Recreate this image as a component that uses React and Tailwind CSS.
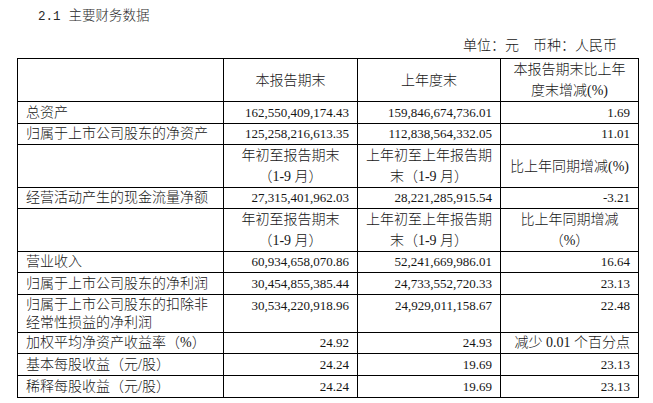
const rows1 = [
  { label: "总资产", a: "162,550,409,174.43", b: "159,846,674,736.01", c: "1.69", h: "h-[22px]" },
  { label: "归属于上市公司股东的净资产", a: "125,258,216,613.35", b: "112,838,564,332.05", c: "11.01", h: "h-[21px]" },
]

const rows3 = [
  { label: "营业收入", a: "60,934,658,070.86", b: "52,241,669,986.01", c: "16.64", h: "h-[21px]" },
  { label: "归属于上市公司股东的净利润", a: "30,454,855,385.44", b: "24,733,552,720.33", c: "23.13", h: "h-[22px]" },
]

const rows4 = [
  { label: "加权平均净资产收益率（%）", a: "24.92", b: "24.93", c: "减少 0.01 个百分点", h: "h-[20px]" },
  { label: "基本每股收益（元/股）", a: "24.24", b: "19.69", c: "23.13", h: "h-[22px]" },
  { label: "稀释每股收益（元/股）", a: "24.24", b: "19.69", c: "23.13", h: "h-[22px]" },
]

const cell = "border border-black p-0 align-middle"
const num = "text-right pr-[8px] text-[13px] leading-[20px]"

function DataRow({ r }) {
  return (
    <tr className={r.h}>
      <td className={`${cell} pl-[8px] text-[14px] leading-[20px]`}>{r.label}</td>
      <td className={`${cell} ${num}`}>{r.a}</td>
      <td className={`${cell} ${num}`}>{r.b}</td>
      <td className={`${cell} ${num} ${r.c.length > 6 ? "text-[14px]" : ""}`}>{r.c}</td>
    </tr>
  )
}

function SubHead({ last, h }) {
  return (
    <tr className={h}>
      <td className={cell}></td>
      <td className={`${cell} text-center text-[14px] leading-[21px]`}>
        年初至报告期末
        <br />
        （1-9 月）
      </td>
      <td className={`${cell} text-center text-[14px] leading-[21px]`}>
        上年初至上年报告期
        <br />
        末（1-9 月）
      </td>
      {last}
    </tr>
  )
}

export default function App() {
  return (
    <div
      className="w-[653px] h-[403px] bg-white text-[#151515] font-light overflow-hidden"
      style={{ fontFamily: '"Liberation Serif", "Noto Sans CJK SC", serif' }}
    >
      <div className="flex items-baseline pl-[38px] pt-[6px] text-[13.5px] leading-[20px] text-[#2a2a2a]">
        <span className="text-[12.5px]" style={{ fontFamily: '"Liberation Mono", monospace' }}>2.1</span>
        <span className="ml-[8px]">主要财务数据</span>
      </div>
      <div className="flex justify-end pr-[36px] mt-[9px] text-[14px] leading-[20px]">
        <span>单位：元</span>
        <span className="ml-[14px]">币种：人民币</span>
      </div>
      <table className="ml-[17px] mt-[2px] w-[621px] table-fixed border-collapse">
        <colgroup>
          <col className="w-[206px]" />
          <col className="w-[134px]" />
          <col className="w-[143px]" />
          <col className="w-[138px]" />
        </colgroup>
        <tbody>
          <tr className="h-[41px]">
            <td className={cell}></td>
            <td className={`${cell} text-center text-[14px]`}>本报告期末</td>
            <td className={`${cell} text-center text-[14px]`}>上年度末</td>
            <td className={`${cell} text-center text-[14px] leading-[21px]`}>
              本报告期末比上年
              <br />
              度末增减(%)
            </td>
          </tr>
          {rows1.map((r) => (
            <DataRow key={r.label} r={r} />
          ))}
          <SubHead
            h="h-[42px]"
            last={<td className={`${cell} text-center text-[14px]`}>比上年同期增减(%)</td>}
          />
          <DataRow
            r={{ label: "经营活动产生的现金流量净额", a: "27,315,401,962.03", b: "28,221,285,915.54", c: "-3.21", h: "h-[21px]" }}
          />
          <SubHead
            h="h-[43px]"
            last={
              <td className={`${cell} text-center text-[14px] leading-[21px]`}>
                比上年同期增减
                <br />
                （%）
              </td>
            }
          />
          {rows3.map((r) => (
            <DataRow key={r.label} r={r} />
          ))}
          <tr className="h-[38px]">
            <td className={`${cell} align-top pt-[1px] pl-[8px] text-[14px] leading-[18px]`}>
              归属于上市公司股东的扣除非
              <br />
              经常性损益的净利润
            </td>
            <td className={`${cell} ${num} align-top pt-[1px]`}>30,534,220,918.96</td>
            <td className={`${cell} ${num} align-top pt-[1px]`}>24,929,011,158.67</td>
            <td className={`${cell} ${num} align-top pt-[1px]`}>22.48</td>
          </tr>
          {rows4.map((r) => (
            <DataRow key={r.label} r={r} />
          ))}
        </tbody>
      </table>
    </div>
  )
}
